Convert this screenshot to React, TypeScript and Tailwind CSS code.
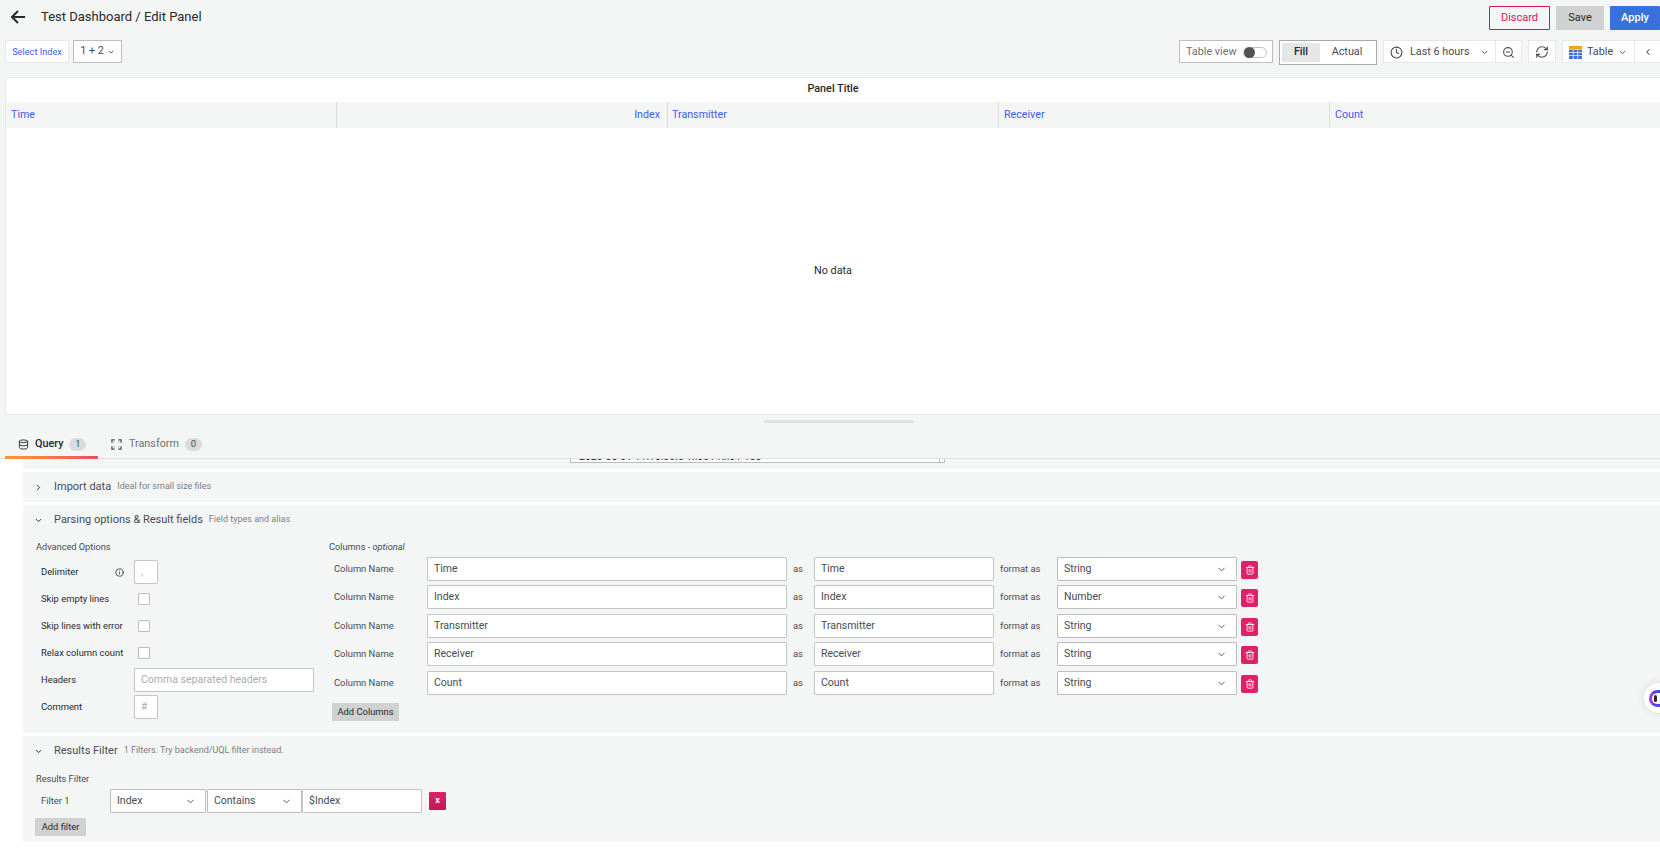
import { ChevronDown, ChevronLeft, ChevronRight, Clock, Database, Info, RefreshCw, Trash2, ZoomOut } from 'lucide-react';
import { FC, ReactNode } from 'react';

const columns = [
    { name: 'Time', format: 'String' },
    { name: 'Index', format: 'Number' },
    { name: 'Transmitter', format: 'String' },
    { name: 'Receiver', format: 'String' },
    { name: 'Count', format: 'String' },
];

const rowGaps = ['mb-[4px]', 'mb-[5px]', 'mb-[4px]', 'mb-[5px]', 'mb-[8px]'];

const BackArrow = () => (
    <svg width="16" height="16" viewBox="0 0 16 16" fill="none" stroke="#24292e" strokeWidth="2">
        <path d="M15 8H2" />
        <path d="M8 2 2 8l6 6" />
    </svg>
);

const TransformIcon = () => (
    <svg width="11" height="11" viewBox="0 0 12 12" fill="none" stroke="#464c54" strokeWidth="1.3">
        <path d="M1 4V1h3M8 1h3v3M11 8v3H8M4 11H1V8" />
        <path d="M4 3 3 4M8 3l1 1M8 9l1-1M4 9 3 8" strokeWidth="0.8" />
    </svg>
);

const TableIcon = () => (
    <svg width="13" height="13" viewBox="0 0 13 13">
        <rect x="0" y="0" width="13" height="3" fill="#f2a71b" />
        <rect x="0" y="3.6" width="13" height="9.4" fill="#3d71d9" />
        <path d="M0 6.5h13M0 9.5h13M4.3 3.6V13M8.7 3.6V13" stroke="#fff" strokeWidth="0.7" />
    </svg>
);

const SelectBox: FC<{ value: string; className: string }> = ({ value, className }) => (
    <div className={`flex h-6 items-center justify-between rounded-[1px] border border-[#bdbdbd] bg-white pl-[6px] pr-[9px] text-[10.5px] text-[#464c54] ${className}`}>
        <span>{value}</span>
        <ChevronDown size={11} strokeWidth={2} />
    </div>
);

const TextBox: FC<{ value?: string; placeholder?: string; className: string }> = ({ value, placeholder, className }) => (
    <div className={`flex h-6 items-center rounded-[1px] border border-[#c4c4c4] bg-white px-[6px] text-[10.5px] ${value ? 'text-[#464c54]' : 'text-[#a9aeb3]'} ${className}`}>
        {value ?? placeholder}
    </div>
);

const SectionTitle: FC<{ open?: boolean; title: string; hint: string }> = ({ open, title, hint }) => (
    <div className="flex items-center">
        <span className="flex w-[31px] justify-start pl-[11px] text-[#24292e]">
            {open ? <ChevronDown size={9} strokeWidth={2.5} /> : <ChevronRight size={9} strokeWidth={2.5} />}
        </span>
        <span className="text-[11px] text-[#464c54]">{title}</span>
        <span className="ml-[6px] text-[9px] text-[#7b8087]">{hint}</span>
    </div>
);

const OptionRow: FC<{ label: string; children?: ReactNode; className?: string }> = ({ label, children, className }) => (
    <div className={`flex items-center text-[9.4px] text-[#24292e] ${className ?? ''}`}>
        <span className="w-[98px] pl-[5px]">{label}</span>
        {children}
    </div>
);

const Check = () => <div className="ml-[4px] h-3 w-3 rounded-[1px] border border-[#bdbdbd] bg-white" />;

const Toolbox: FC<{ children: ReactNode; className: string }> = ({ children, className }) => (
    <div className={`flex h-[23px] items-center border border-[#e6e8e8] bg-white pt-px text-[10.8px] text-[#464c54] ${className}`}>
        {children}
    </div>
);

export default function App() {
    return (
        <div className="flex h-[853px] w-[1660px] flex-col overflow-hidden bg-white font-['Roboto',sans-serif] text-[#24292e]">
            <div className="bg-[#f4f5f5]">
                <header className="flex h-10 items-start">
                    <div className="ml-[10px] mt-[9px]">
                        <BackArrow />
                    </div>
                    <h1 className="ml-[15px] mt-[7px] text-[13px] leading-5 text-[#24292e]">Test Dashboard / Edit Panel</h1>
                    <div className="ml-auto mt-[6px] flex gap-[6px] text-[11px]">
                        <button className="h-6 w-[61px] rounded-[1px] border border-[#d1175f] text-[#d1175f]">Discard</button>
                        <button className="h-6 w-[48px] rounded-[1px] bg-[#d0d1d1] text-[#24292e]">Save</button>
                        <button className="h-6 w-[50px] rounded-[1px] bg-[#3871dc] font-medium text-white">Apply</button>
                    </div>
                </header>

                <div className="flex h-[37px] items-start pl-[5px]">
                    <div className="flex h-[23px] w-[64px] items-center justify-center border border-[#e6e8e8] bg-white text-[9.2px] text-[#3d5bf0]">Select Index</div>
                    <div className="ml-[4px] flex h-[23px] w-[49px] items-center justify-center gap-[3px] border border-[#bdbdbd] bg-white text-[10.8px] text-[#464c54]">
                        1 + 2 <ChevronDown size={8} strokeWidth={2.5} />
                    </div>
                    <div className="-mr-px ml-auto flex items-start">
                        <div className="flex h-[23px] w-[94px] items-center border border-[#bdbdbd] bg-white pl-[6px] pt-px text-[10.8px] text-[#6c7178]">
                            Table view
                            <span className="ml-[6px] flex h-[11px] w-6 items-center rounded-full border border-[#bfc2c4] bg-white">
                                <span className="h-[11px] w-[11px] rounded-full bg-[#505458]" />
                            </span>
                        </div>
                        <div className="ml-[6px] flex h-[25px] w-[98px] border border-[#a8abad] bg-white p-[2px] text-[10.8px]">
                            <span className="flex w-[38px] items-center justify-center bg-[#e4e6e8] font-medium text-[#24292e]">Fill</span>
                            <span className="flex flex-1 items-center justify-center text-[#464c54]">Actual</span>
                        </div>
                        <Toolbox className="ml-[6px] w-[113px] pl-[6px]">
                            <Clock size={13} />
                            <span className="ml-[7px]">Last 6 hours</span>
                            <ChevronDown size={9} strokeWidth={2.5} className="ml-[10px]" />
                        </Toolbox>
                        <Toolbox className="-ml-px w-[27px] justify-center">
                            <ZoomOut size={13} />
                        </Toolbox>
                        <Toolbox className="ml-[6px] w-[28px] justify-center">
                            <RefreshCw size={14} />
                        </Toolbox>
                        <Toolbox className="ml-[6px] w-[73px] pl-[6px]">
                            <TableIcon />
                            <span className="ml-[5px]">Table</span>
                            <ChevronDown size={9} strokeWidth={2.5} className="ml-[5px]" />
                        </Toolbox>
                        <Toolbox className="-ml-px w-[27px] justify-center">
                            <ChevronLeft size={10} strokeWidth={2.5} />
                        </Toolbox>
                    </div>
                </div>

                <section className="ml-[5px] flex h-[338px] flex-col border border-r-0 border-[#e6e8e8] bg-white">
                    <div className="flex h-6 items-center justify-center pb-[2px] text-[10.8px] font-medium text-[#24292e]">Panel Title</div>
                    <div className="flex h-[26px] bg-[#f4f5f5] text-[10.7px] text-[#3d5bf0]">
                        <div className="flex w-[331px] items-center border-r border-[#dcdede] pl-[5px]">Time</div>
                        <div className="flex w-[331px] items-center justify-end border-r border-[#dcdede] pr-[7px]">Index</div>
                        <div className="flex w-[331px] items-center border-r border-[#dcdede] pl-[4px]">Transmitter</div>
                        <div className="flex w-[331px] items-center border-r border-[#dcdede] pl-[5px]">Receiver</div>
                        <div className="flex flex-1 items-center pl-[5px]">Count</div>
                    </div>
                    <div className="flex flex-1 items-center justify-center text-[10.8px] text-[#24292e]">No data</div>
                </section>

                <div className="flex h-[14px] justify-center pl-[18px] pt-[5px]">
                    <div className="h-[3px] w-[150px] rounded-full bg-[#e0e2e2]" />
                </div>

                <nav className="flex h-[30px] border-b border-[#dfe1e1] pl-[5px] pt-[2px] text-[10.8px]">
                    <div className="relative flex w-[93px] items-center pl-[13px]">
                        <Database size={11} />
                        <span className="ml-[6px] font-medium text-[#24292e]">Query</span>
                        <span className="ml-[6px] flex h-[13px] w-[17px] items-center justify-center rounded-full bg-[#d9dcde] text-[9.5px] text-[#464c54]">1</span>
                        <span className="absolute bottom-[-1px] left-0 h-[3px] w-full bg-gradient-to-r from-[#ff9830] to-[#f2495c]" />
                    </div>
                    <div className="ml-[13px] flex items-center">
                        <TransformIcon />
                        <span className="ml-[7px] text-[#6c7178]">Transform</span>
                        <span className="ml-[6px] flex h-[13px] w-[17px] items-center justify-center rounded-full bg-[#d9dcde] text-[9.5px] text-[#464c54]">0</span>
                    </div>
                </nav>
            </div>

            <main className="flex flex-1 flex-col gap-[3px] pl-[23px]">
                <div className="h-[10px] bg-[#f4f5f5] pl-[547px]">
                    <div className="relative h-[4px] w-[375px] overflow-hidden rounded-[1px] border-x border-b border-[#bdbdbd] bg-white pl-[8px]">
                        <div className="-mt-[8px] text-[10.5px] leading-3 text-[#24292e]">2020-05-01 11:15:00.0 Tx001 Rx01 158</div>
                        <span className="absolute right-0 top-0 h-[3px] w-[5px] border-l border-[#bdbdbd]" />
                    </div>
                </div>

                <div className="flex h-[30px] items-center bg-[#f4f5f5]">
                    <SectionTitle title="Import data" hint="Ideal for small size files" />
                </div>

                <div className="h-[228px] bg-[#f4f5f5]">
                    <div className="flex h-[30px] items-center">
                        <SectionTitle open title="Parsing options & Result fields" hint="Field types and alias" />
                    </div>
                    <div className="flex pl-[13px] pt-[4px]">
                        <div className="w-[293px]">
                            <div className="h-[13px] text-[9.2px] leading-[15px] text-[#464c54]">Advanced Options</div>
                            <OptionRow label="Delimiter" className="relative mt-[8px]">
                                <div className="absolute left-[79px]">
                                    <Info size={9} />
                                </div>
                                <TextBox placeholder="," className="w-[24px]" />
                            </OptionRow>
                            <OptionRow label="Skip empty lines" className="mt-[9px] h-3">
                                <Check />
                            </OptionRow>
                            <OptionRow label="Skip lines with error" className="mt-[15px] h-3">
                                <Check />
                            </OptionRow>
                            <OptionRow label="Relax column count" className="mt-[15px] h-3">
                                <Check />
                            </OptionRow>
                            <OptionRow label="Headers" className="mt-[9px]">
                                <TextBox placeholder="Comma separated headers" className="w-[180px]" />
                            </OptionRow>
                            <OptionRow label="Comment" className="mt-[3px]">
                                <TextBox placeholder="#" className="w-[24px]" />
                            </OptionRow>
                        </div>
                        <div>
                            <div className="mb-[5px] h-[13px] text-[9.2px] leading-[15px] text-[#464c54]">
                                Columns - <em>optional</em>
                            </div>
                            {columns.map((column, i) => (
                                <div key={column.name} className={`flex items-center text-[9.4px] text-[#464c54] ${rowGaps[i]}`}>
                                    <span className="w-[98px] pl-[5px]">Column Name</span>
                                    <TextBox value={column.name} className="w-[360px]" />
                                    <span className="w-[27px] pl-[6px]">as</span>
                                    <TextBox value={column.name} className="w-[180px]" />
                                    <span className="w-[63px] pl-[6px]">format as</span>
                                    <SelectBox value={column.format} className="w-[180px]" />
                                    <span className="ml-[4px] mt-[2px] flex h-[18px] w-[17px] items-center justify-center rounded-[2px] bg-[#e02068] text-white">
                                        <Trash2 size={10} />
                                    </span>
                                </div>
                            ))}
                            <button className="ml-[3px] block h-[18px] w-[67px] rounded-[1px] bg-[#d0d1d1] text-[9.4px] text-[#24292e]">Add Columns</button>
                        </div>
                    </div>
                </div>

                <div className="h-[106px] bg-[#f4f5f5]">
                    <div className="flex h-[30px] items-center">
                        <SectionTitle open title="Results Filter" hint="1 Filters. Try backend/UQL filter instead." />
                    </div>
                    <div className="pl-[13px] pt-[5px]">
                        <div className="h-[13px] text-[9.2px] leading-[15px] text-[#464c54]">Results Filter</div>
                        <div className="mt-[5px] flex items-center text-[9.4px] text-[#464c54]">
                            <span className="w-[74px] pl-[5px]">Filter 1</span>
                            <SelectBox value="Index" className="w-[96px]" />
                            <SelectBox value="Contains" className="ml-px w-[95px]" />
                            <TextBox value="$Index" className="w-[120px]" />
                            <button className="ml-[7px] flex h-[18px] w-[17px] items-center justify-center rounded-[1px] bg-gradient-to-b from-[#e02068] to-[#c2185b] text-[9px] font-bold text-white">x</button>
                        </div>
                        <button className="-ml-px mt-[5px] block h-[18px] w-[51px] rounded-[1px] bg-[#d0d1d1] text-[9.4px] text-[#24292e]">Add filter</button>
                    </div>
                </div>
            </main>

            {/* chat widget peeking in from the right edge */}
            <div className="fixed left-[1644px] top-[683px] flex h-[30px] w-[30px] items-center justify-center rounded-full bg-white shadow-[0_0_10px_rgba(0,0,0,0.12)]">
                <div className="relative h-[17px] w-[20px] rounded-full border-[3px] border-[#4f46e5] border-l-[#a23ce0]">
                    <span className="absolute left-[2px] top-[2px] h-[7px] w-[3px] rounded-full bg-[#24292e]" />
                </div>
            </div>
        </div>
    );
}
